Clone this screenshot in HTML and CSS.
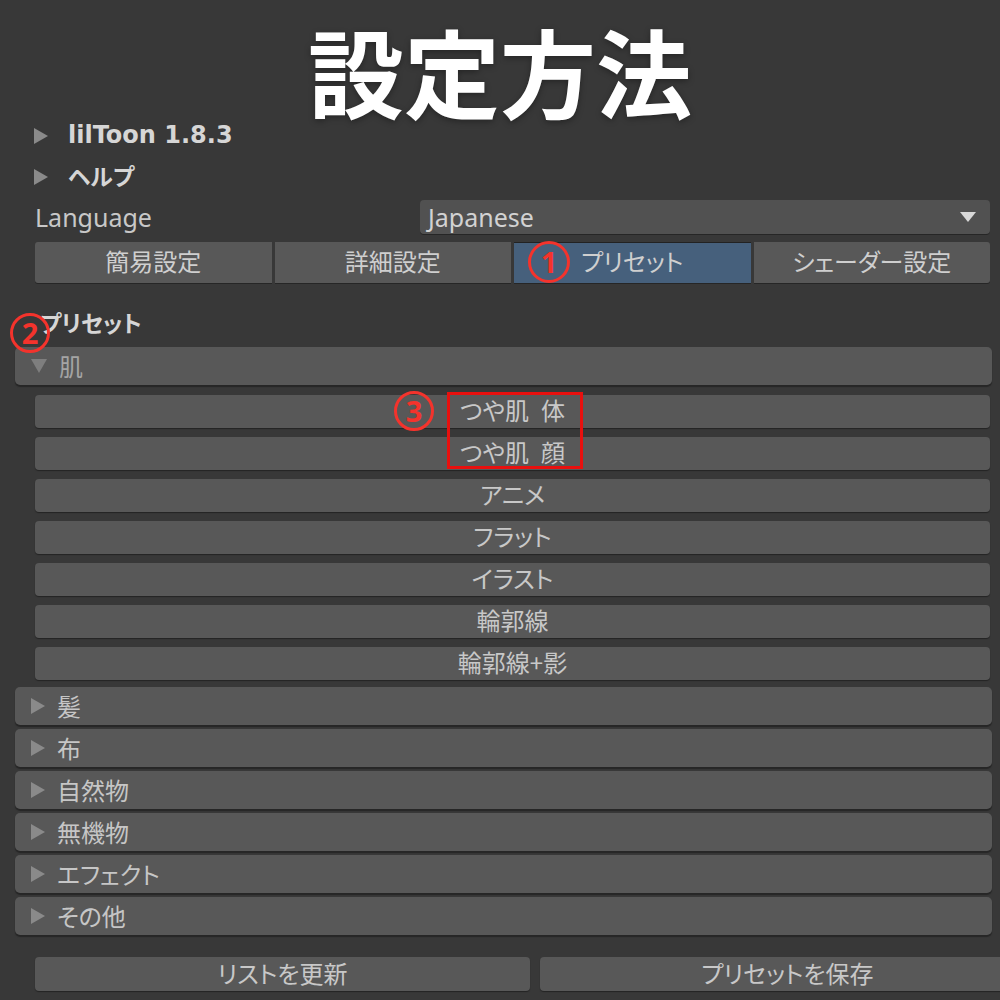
FILE: index.html
```html
<!DOCTYPE html>
<html lang="ja">
<head>
    <meta charset="UTF-8">
    <meta name="viewport" content="width=device-width, initial-scale=1.0">
    <title>設定方法</title>
    <link rel="stylesheet" href="styles.css">
</head>
<body>
<h1 class="title">設定方法</h1>

<div class="panel">
    <div class="headRow"><span class="arrow right"></span><span class="headText latin">lilToon 1.8.3</span></div>
    <div class="headRow"><span class="arrow right"></span><span class="headText">ヘルプ</span></div>

    <div class="langRow">
        <span class="langLabel">Language</span>
        <div class="dropdown">
            <span>Japanese</span>
            <span class="dropArrow"></span>
        </div>
    </div>

    <div class="tabs">
        <div class="tab">簡易設定</div>
        <div class="tab">詳細設定</div>
        <div class="tab selected">プリセット</div>
        <div class="tab">シェーダー設定</div>
    </div>

    <div class="sectionLabel">プリセット</div>

    <div class="foldout open"><span class="arrow down"></span><span>肌</span></div>
    <div class="presetList">
        <div class="presetBtn">つや肌&ensp;体</div>
        <div class="presetBtn">つや肌&ensp;顔</div>
        <div class="presetBtn">アニメ</div>
        <div class="presetBtn">フラット</div>
        <div class="presetBtn">イラスト</div>
        <div class="presetBtn">輪郭線</div>
        <div class="presetBtn">輪郭線+影</div>
    </div>

    <div class="foldoutList">
        <div class="foldout"><span class="arrow right"></span><span>髪</span></div>
        <div class="foldout"><span class="arrow right"></span><span>布</span></div>
        <div class="foldout"><span class="arrow right"></span><span>自然物</span></div>
        <div class="foldout"><span class="arrow right"></span><span>無機物</span></div>
        <div class="foldout"><span class="arrow right"></span><span>エフェクト</span></div>
        <div class="foldout"><span class="arrow right"></span><span>その他</span></div>
    </div>

    <div class="bottomRow">
        <div class="presetBtn">リストを更新</div>
        <div class="presetBtn">プリセットを保存</div>
    </div>
</div>

<!-- annotations -->
<div class="mark mark1">1</div>
<div class="mark mark2">2</div>
<div class="mark mark3">3</div>
<div class="highlight"></div>
</body>
</html>
```

FILE: styles.css
```css
body {
    background-color: #383838; /* Unity dark inspector */
    color: #c4c4c4;
    font-family: "Noto Sans", "Noto Sans CJK JP", sans-serif;
    margin: 0;
    width: 1000px;
    height: 1000px;
    overflow: hidden;
    position: relative;
}

.title {
    margin: 0 0 -25px;
    text-align: center;
    font-family: "Noto Sans CJK JP", sans-serif;
    font-size: 96px;
    font-weight: 700;
    color: #ffffff;
    text-shadow: 0 2px 6px rgba(0, 0, 0, 0.35);
    line-height: 140px;
}

.panel {
    display: flex;
    flex-direction: column;
    font-size: 24px;
    font-feature-settings: "palt";
}

/* triangles */
.arrow {
    width: 0;
    height: 0;
    flex: none;
}

.arrow.right {
    border-top: 8px solid transparent;
    border-bottom: 8px solid transparent;
    border-left: 14px solid #8a8a8a;
}

.arrow.down {
    border-left: 8px solid transparent;
    border-right: 8px solid transparent;
    border-top: 14px solid #7e7e7e;
}

.headRow {
    height: 41px;
    display: flex;
    align-items: center;
    padding-left: 34px;
    gap: 20px;
}

.headText {
    font-family: "Noto Sans CJK JP", sans-serif;
    font-weight: 700;
    font-size: 23px;
    color: #d6d6d6;
    padding-bottom: 3px;
}

.headText.latin {
    font-family: "DejaVu Sans", sans-serif;
    font-size: 24px;
    padding-bottom: 1px;
}

.langRow {
    display: flex;
    align-items: center;
    height: 34px;
    margin-top: 3px;
    padding: 0 10px 0 35px;
    font-size: 25px;
}

.langLabel {
    width: 385px;
    color: #c8c8c8;
}

.dropdown {
    flex: 1;
    height: 34px;
    background-color: #515151;
    border-radius: 4px;
    box-shadow: 0 1px 0 #262626;
    display: flex;
    align-items: center;
    justify-content: space-between;
    padding: 0 14px 0 8px;
    color: #d2d2d2;
}

.dropArrow {
    border-left: 8px solid transparent;
    border-right: 8px solid transparent;
    border-top: 10px solid #d8d8d8;
}

.tabs {
    display: flex;
    gap: 3px;
    margin: 8px 10px 0 35px;
    height: 41px;
}

.tab {
    flex: 1;
    background-color: #585858;
    display: flex;
    align-items: center;
    justify-content: center;
    font-family: "Noto Sans CJK JP", sans-serif;
    color: #cfcfcf;
    box-shadow: 0 1px 0 #262626;
    padding-bottom: 4px;
    box-sizing: border-box;
}

.tab:first-child {
    border-radius: 3px 0 0 3px;
}

.tab:last-child {
    border-radius: 0 3px 3px 0;
}

.tab.selected {
    background-color: #46607c;
    box-shadow: inset 0 1px 0 #222, 0 1px 0 #262626;
}

.sectionLabel {
    margin: 20px 0 0 40px;
    height: 40px;
    display: flex;
    align-items: center;
    font-family: "Noto Sans CJK JP", sans-serif;
    font-weight: 700;
    font-size: 23px;
    color: #d6d6d6;
    padding-bottom: 3px;
    box-sizing: border-box;
}

.foldout {
    height: 38px;
    margin: 0 8px 0 15px;
    background-color: #585858;
    border-radius: 5px;
    box-shadow: 0 2px 1px #262626;
    display: flex;
    align-items: center;
    gap: 12px;
    padding: 0 0 2px 16px;
    box-sizing: border-box;
    font-family: "Noto Sans CJK JP", sans-serif;
    color: #c6c6c6;
}

.foldout .arrow {
    margin-top: 2px;
}

.foldout.open {
    margin-top: 4px;
    color: #a4a4a4;
}

.presetList {
    display: flex;
    flex-direction: column;
    gap: 9px;
    margin: 10px 10px 0 35px;
}

.presetBtn {
    height: 33px;
    background-color: #585858;
    border-radius: 4px;
    box-shadow: 0 1px 1px #242424;
    display: flex;
    align-items: center;
    justify-content: center;
    font-family: "Noto Sans CJK JP", sans-serif;
    color: #c8c8c8;
    padding-bottom: 4px;
    box-sizing: border-box;
}

.foldoutList {
    display: flex;
    flex-direction: column;
    gap: 4px;
    margin-top: 7px;
}

.bottomRow {
    display: flex;
    gap: 10px;
    margin: 22px 0 0 35px;
    width: 1000px;
}

.bottomRow .presetBtn {
    flex: 1;
    height: 34px;
}

/* red annotations */
.mark {
    position: absolute;
    width: 34px;
    height: 34px;
    border: 3px solid #f4332c;
    border-radius: 50%;
    color: #f4332c;
    font-family: "Noto Sans", sans-serif;
    font-weight: 700;
    font-size: 29px;
    line-height: 34px;
    text-align: center;
}

.mark1 {
    left: 528px;
    top: 241px;
    width: 36px;
    height: 36px;
    line-height: 36px;
}

.mark2 {
    left: 10px;
    top: 313px;
}

.mark3 {
    left: 394px;
    top: 391px;
}

.highlight {
    position: absolute;
    left: 447px;
    top: 392px;
    width: 130px;
    height: 71px;
    border: 3px solid #e8100e;
}
```
